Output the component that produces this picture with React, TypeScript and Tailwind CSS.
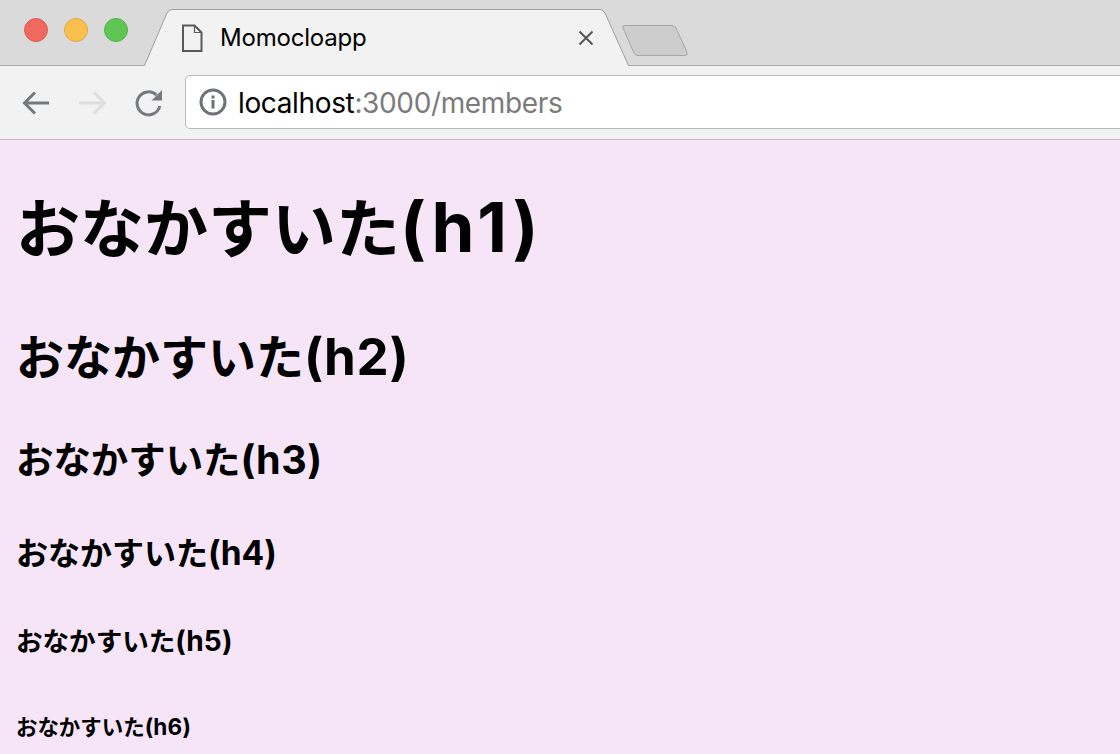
import React from "react";

const FONT = "font-['Inter','Noto_Sans_CJK_JP',sans-serif]";

function Light({ fill, border }: { fill: string; border: string }) {
  return <span className={`block w-6 h-6 rounded-full border ${fill} ${border}`} />;
}

function TabStrip() {
  return (
    <div className="relative h-[66px] bg-[#dadada] border-b border-[#a8a8a8] flex items-start">
      <div className="flex gap-4 pl-6 pt-[18px]">
        <Light fill="bg-[#f0695f]" border="border-[#dd5c54]" />
        <Light fill="bg-[#f8bf4e]" border="border-[#e2aa3f]" />
        <Light fill="bg-[#5fc653]" border="border-[#52b146]" />
      </div>
      <svg className="absolute left-0 top-0" width="700" height="67" viewBox="0 0 700 67" fill="none">
        <path d="M144.5 66 L167 13 Q169 9.5 172 9.5 L600 9.5 Q603 9.5 605 13 L628.5 66 Z" fill="#f2f2f2" />
        <path d="M144.5 65.5 L167 13 Q169 9.5 172 9.5 L600 9.5 Q603 9.5 605 13 L628.5 65.5" stroke="#a0a0a0" strokeWidth="1" />
        <path d="M623 28 Q622 25.5 625 25.5 L672 25.5 Q675 25.5 676 28 L687 52 Q688 55.5 685 55.5 L638 55.5 Q635 55.5 634 53 Z" fill="#cdcdcd" stroke="#a6a6a6" strokeWidth="1" />
        <path d="M183 25.5 H194.5 L201.5 32.5 V51 H183 Z" fill="none" stroke="#5a5a5a" strokeWidth="2" />
        <path d="M194.5 25.5 V32.5 H201.5" fill="none" stroke="#5a5a5a" strokeWidth="1.2" />
        <path d="M579.5 31.5 L592.5 44.5 M592.5 31.5 L579.5 44.5" stroke="#555" strokeWidth="2" />
      </svg>
      <span className="absolute left-[220px] top-[23px] text-[24px] leading-[30px] text-black font-['Inter',sans-serif] tracking-[-0.2px]">
        Momocloapp
      </span>
    </div>
  );
}

function Toolbar() {
  return (
    <div className="h-[74px] bg-[#f2f2f2] border-b border-[#bdbdbd] flex items-center overflow-hidden">
      <div className="flex items-center pl-[21px] w-[185px] shrink-0">
        <svg width="150" height="32" viewBox="0 0 150 32" fill="none">
          <path d="M28 16 H3.5 M14 5.5 L3.5 16 L14 26.5" stroke="#75787c" strokeWidth="3" />
          <path d="M58 16 H83 M73 5.5 L83.5 16 L73 26.5" stroke="#dedede" strokeWidth="3" />
          <path d="M135.5 8 A11.5 11.5 0 1 0 138.8 19" stroke="#75787c" strokeWidth="3" />
          <path d="M141 3 V13.5 H130.5 Z" fill="#75787c" />
        </svg>
      </div>
      <div className="flex-1 h-[54px] -mr-4 bg-white border border-[#b9b9b9] rounded-[5px] flex items-center pl-[13px] gap-[11px] mb-[1px]">
        <svg width="28" height="28" viewBox="0 0 28 28" fill="none">
          <circle cx="14" cy="14" r="12" stroke="#6e7176" strokeWidth="3" />
          <rect x="12.5" y="12" width="3" height="8.5" fill="#6e7176" />
          <rect x="12.5" y="7.5" width="3" height="3" fill="#6e7176" />
        </svg>
        <span className="pt-[2px] text-[28px] leading-[36px] font-['Inter',sans-serif] text-black tracking-[-0.36px]">
          localhost<span className="text-[#7b7b7b]">:3000/members</span>
        </span>
      </div>
    </div>
  );
}

const Heading = ({
  n,
  tag: Tag,
  cls,
  latin,
}: {
  n: string;
  tag: "h1" | "h2" | "h3" | "h4" | "h5" | "h6";
  cls: string;
  latin: string;
}) => (
  <Tag className={cls}>
    おなかすいた<span className={`leading-[1] ${latin}`}>(h{n})</span>
  </Tag>
);

export default function App() {
  return (
    <div className="w-[1120px] h-[754px] overflow-hidden flex flex-col bg-[#f6e5f6]">
      <TabStrip />
      <Toolbar />
      <main className={`flex-1 overflow-hidden px-4 text-black font-bold leading-[1.5] ${FONT}`}>
        <Heading tag="h1" n="1" cls="text-[64px] mt-[41px] mb-[45px]" latin="text-[69px] tracking-[0.08em]" />
        <Heading tag="h2" n="2" cls="text-[48px] mb-[39px]" latin="text-[51px] tracking-[0.015em]" />
        <Heading tag="h3" n="3" cls="text-[37.44px] mb-[40.5px]" latin="text-[39.5px] tracking-[0.015em]" />
        <Heading tag="h4" n="4" cls="text-[32px] mb-[44.4px]" latin="text-[33.5px]" />
        <Heading tag="h5" n="5" cls="text-[26.56px] mb-[49px]" latin="text-[28px] tracking-[0.01em]" />
        <Heading tag="h6" n="6" cls="text-[21.44px]" latin="text-[22.5px] tracking-[0.01em]" />
      </main>
    </div>
  );
}
